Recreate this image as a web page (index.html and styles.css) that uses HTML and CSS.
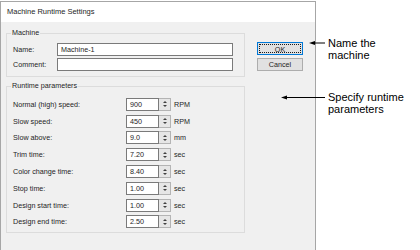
FILE: index.html
```html
<!DOCTYPE html>
<html>
<head>
<meta charset="utf-8">
<link rel="stylesheet" href="styles.css">
</head>
<body>
<div class="stage">
  <div class="dialog">
    <div class="titlebar">Machine Runtime Settings</div>
    <div class="client">
      <div class="groups">
        <fieldset class="group machine">
          <legend>Machine</legend>
          <div class="field"><span class="flabel">Name:</span><span class="textbox">Machine-1</span></div>
          <div class="field"><span class="flabel">Comment:</span><span class="textbox"></span></div>
        </fieldset>
        <fieldset class="group runtime">
          <legend>Runtime parameters</legend>
          <div class="param"><span class="plabel">Normal (high) speed:</span><span class="spin"><span class="spinval">900</span><span class="spinbtn"><i class="up"></i><i class="down"></i></span></span><span class="unit">RPM</span></div>
          <div class="param"><span class="plabel">Slow speed:</span><span class="spin"><span class="spinval">450</span><span class="spinbtn"><i class="up"></i><i class="down"></i></span></span><span class="unit">RPM</span></div>
          <div class="param"><span class="plabel">Slow above:</span><span class="spin"><span class="spinval">9.0</span><span class="spinbtn"><i class="up"></i><i class="down"></i></span></span><span class="unit">mm</span></div>
          <div class="param"><span class="plabel">Trim time:</span><span class="spin"><span class="spinval">7.20</span><span class="spinbtn"><i class="up"></i><i class="down"></i></span></span><span class="unit">sec</span></div>
          <div class="param"><span class="plabel">Color change time:</span><span class="spin"><span class="spinval">8.40</span><span class="spinbtn"><i class="up"></i><i class="down"></i></span></span><span class="unit">sec</span></div>
          <div class="param"><span class="plabel">Stop time:</span><span class="spin"><span class="spinval">1.00</span><span class="spinbtn"><i class="up"></i><i class="down"></i></span></span><span class="unit">sec</span></div>
          <div class="param"><span class="plabel">Design start time:</span><span class="spin"><span class="spinval">1.00</span><span class="spinbtn"><i class="up"></i><i class="down"></i></span></span><span class="unit">sec</span></div>
          <div class="param"><span class="plabel">Design end time:</span><span class="spin"><span class="spinval">2.50</span><span class="spinbtn"><i class="up"></i><i class="down"></i></span></span><span class="unit">sec</span></div>
        </fieldset>
      </div>
      <div class="buttons">
        <div class="btn default"><span class="focus">OK</span></div>
        <div class="btn">Cancel</div>
      </div>
    </div>
  </div>
  <svg class="arrows" width="420" height="250" viewBox="0 0 420 250">
    <line x1="313" y1="43" x2="325" y2="43" stroke="#000" stroke-width="1"/>
    <polygon points="309,43 315,41 315,45" fill="#000"/>
    <line x1="285" y1="97.5" x2="325" y2="97.5" stroke="#000" stroke-width="1"/>
    <polygon points="281,97.5 287,95.5 287,99.5" fill="#000"/>
  </svg>
  <div class="callout c1">Name the<br>machine</div>
  <div class="callout c2">Specify runtime<br>parameters</div>
</div>
</body>
</html>
```
FILE: styles.css
```css
html, body {
  margin: 0;
  padding: 0;
  background: #fff;
}
.stage {
  position: relative;
  width: 420px;
  height: 250px;
  overflow: hidden;
  font-family: "Liberation Sans", Arial, sans-serif;
  padding-top: 1px;
  box-sizing: border-box;
}
.dialog {
  width: 314px;
  height: 250px;
  border: 1px solid #a6a6a6;
  border-bottom: none;
  background: #f0f0f0;
  font-size: 7.2px;
  color: #1e1e1e;
}
.titlebar {
  height: 20px;
  line-height: 20px;
  background: #fff;
  padding-left: 6px;
  font-size: 7.5px;
}
.client {
  display: flex;
  gap: 12px;
  padding: 6px 0 0 5px;
}
.groups {
  width: 239px;
  display: flex;
  flex-direction: column;
  gap: 4px;
}
.group {
  margin: 0;
  border: 1px solid #dcdcdc;
  padding: 5px 11px 5px 6px;
  min-width: 0;
}
.group legend {
  padding: 0 1px;
  margin-left: -2px;
  line-height: 10px;
  font-size: 7.2px;
}
.field {
  display: flex;
  align-items: center;
  height: 13px;
}
.field + .field {
  margin-top: 2px;
}
.flabel {
  width: 44px;
}
.textbox {
  width: 176px;
  height: 13px;
  box-sizing: border-box;
  border: 1px solid #7a7a7a;
  background: #fff;
  padding-left: 3px;
  line-height: 11px;
}
.runtime {
  padding-bottom: 2px;
}
.param {
  display: flex;
  align-items: center;
  height: 16.8px;
}
.plabel {
  width: 113px;
}
.spin {
  display: flex;
  height: 13px;
}
.spinval {
  width: 33px;
  height: 13px;
  box-sizing: border-box;
  border: 1px solid #7a7a7a;
  background: #fff;
  padding-left: 3px;
  line-height: 11px;
}
.spinbtn {
  width: 12px;
  height: 13px;
  box-sizing: border-box;
  border: 1px solid #b4b4b4;
  border-left: none;
  background: #e6e6e6;
  display: flex;
  flex-direction: column;
  align-items: center;
  justify-content: center;
  gap: 2px;
}
.spinbtn i {
  display: block;
  width: 0;
  height: 0;
  border-left: 2px solid transparent;
  border-right: 2px solid transparent;
}
.spinbtn .up {
  border-bottom: 2px solid #404040;
}
.spinbtn .down {
  border-top: 2px solid #404040;
}
.unit {
  margin-left: 3px;
}
.buttons {
  display: flex;
  flex-direction: column;
  gap: 3px;
  padding-top: 14px;
}
.btn {
  width: 46px;
  height: 13px;
  box-sizing: border-box;
  border: 1px solid #adadad;
  background: #e1e1e1;
  text-align: center;
  line-height: 11px;
  font-size: 7.2px;
}
.btn.default {
  border: 1px solid #0078d7;
  padding: 1px;
}
.btn.default .focus {
  display: block;
  height: 9px;
  line-height: 9px;
  border: 1px dotted #1a1a1a;
  box-sizing: border-box;
}
.arrows {
  position: absolute;
  left: 0;
  top: 0;
}
.callout {
  position: absolute;
  left: 328px;
  font-size: 11px;
  line-height: 12px;
  color: #000;
}
.c1 { top: 37px; }
.c2 { top: 91px; }
```
